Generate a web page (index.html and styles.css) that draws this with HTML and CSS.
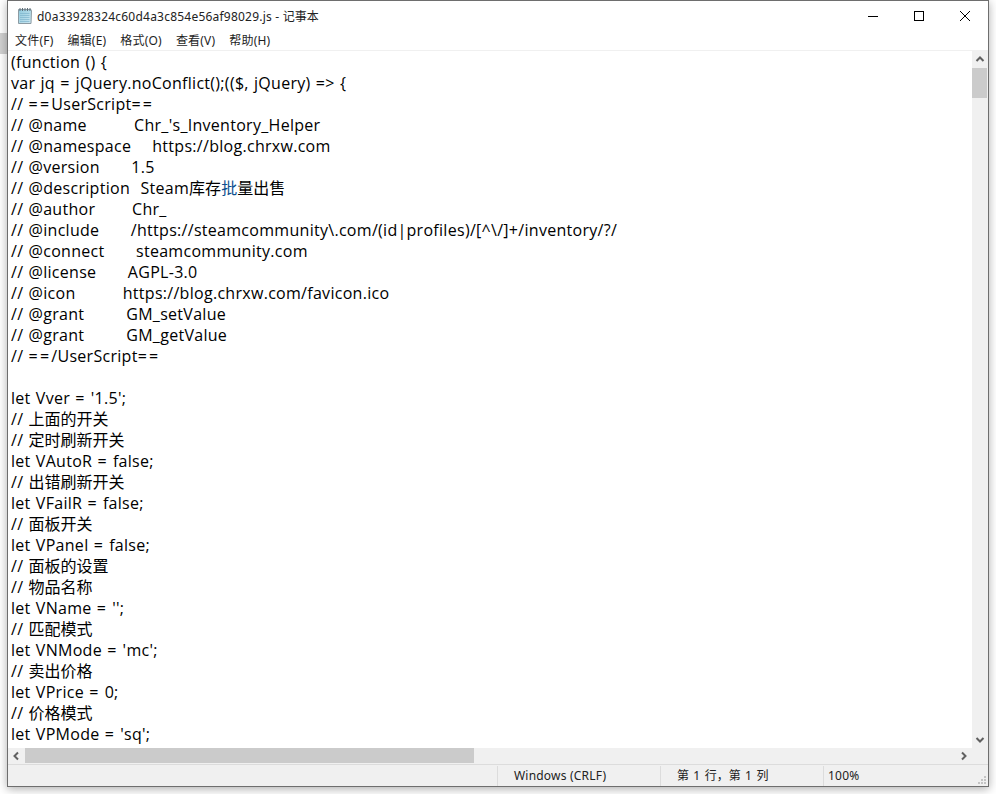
FILE: index.html
```html
<!DOCTYPE html>
<html lang="zh-CN">
<head>
<meta charset="utf-8">
<title>记事本</title>
<link rel="stylesheet" href="styles.css">
</head>
<body>
<div class="backdrop"></div>
<div class="window">
  <header class="titlebar">
    <svg class="app-icon" width="16" height="18" viewBox="0 0 16 18">
      <defs>
        <linearGradient id="page" x1="0" y1="0" x2="1" y2="1">
          <stop offset="0" stop-color="#8fc9dc"/>
          <stop offset="1" stop-color="#cfe8f2"/>
        </linearGradient>
      </defs>
      <path d="M1.500 2.500h12.500l.5 1-.5 13h-12.500z" fill="url(#page)" stroke="#8c9ba3"/>
      <path d="M3 6.500h9.500M3 8.500h9.500M3 10.500h9.500M3 12.500h9.500M3 14.500h9.500" stroke="#7db4cc" stroke-opacity="0.7"/>
      <path d="M3 1v3M5.500 1v3M8 1v3M10.500 1v3M13 1v3" stroke="#5f6f78"/>
    </svg>
    <span class="title">d0a33928324c60d4a3c854e56af98029.js - <span class="zh">记事本</span></span>
    <div class="controls">
      <svg class="ctl" width="46" height="30" viewBox="0 0 46 30"><path d="M18 15.500h10" stroke="#000"/></svg>
      <svg class="ctl" width="46" height="30" viewBox="0 0 46 30"><rect x="18.500" y="10.500" width="9" height="9" fill="none" stroke="#000"/></svg>
      <svg class="ctl" width="46" height="30" viewBox="0 0 46 30"><path d="M18 10l10 10M28 10l-10 10" stroke="#000"/></svg>
    </div>
  </header>
  <nav class="menubar">
    <span class="menu">文件(F)</span>
    <span class="menu">编辑(E)</span>
    <span class="menu">格式(O)</span>
    <span class="menu">查看(V)</span>
    <span class="menu">帮助(H)</span>
  </nav>
  <div class="editor">
    <div class="text-row">
<pre class="code">(function () {
var jq <span class="eq">=</span> jQuery.noConflict();(($, jQuery) =&gt; {
// <span class="eq2">==</span>UserScript<span class="eq2">==</span>
// @name         Chr_'s_Inventory_Helper
// @namespace    https://blog.chrxw.com
// @version      1.5
// @description  Steam<span class="zh">库存</span><span class="zh selected-word">批</span><span class="zh">量出售</span>
// @author       Chr_
// @include      /https://steamcommunity\.com/(id|profiles)/[^\/]+/inventory/?/
// @connect      steamcommunity.com
// @license      AGPL-3.0
// @icon         https://blog.chrxw.com/favicon.ico
// @grant        GM_setValue
// @grant        GM_getValue
// <span class="eq2">==</span>/UserScript<span class="eq2">==</span>

let Vver <span class="eq">=</span> '1.5';
// <span class="zh">上面的开关</span>
// <span class="zh">定时刷新开关</span>
let VAutoR <span class="eq">=</span> false;
// <span class="zh">出错刷新开关</span>
let VFailR <span class="eq">=</span> false;
// <span class="zh">面板开关</span>
let VPanel <span class="eq">=</span> false;
// <span class="zh">面板的设置</span>
// <span class="zh">物品名称</span>
let VName <span class="eq">=</span> '';
// <span class="zh">匹配模式</span>
let VNMode <span class="eq">=</span> 'mc';
// <span class="zh">卖出价格</span>
let VPrice <span class="eq">=</span> 0;
// <span class="zh">价格模式</span>
let VPMode <span class="eq">=</span> 'sq';</pre>
      <div class="vscroll">
        <svg class="arrow" width="16" height="17" viewBox="0 0 16 17"><path d="M4.500 10l3.500-3.500 3.500 3.500" fill="none" stroke="#606060" stroke-width="2"/></svg>
        <div class="vtrack"><div class="vthumb"></div></div>
        <svg class="arrow" width="16" height="17" viewBox="0 0 16 17"><path d="M4.500 7l3.500 3.500L11.500 7" fill="none" stroke="#606060" stroke-width="2"/></svg>
      </div>
    </div>
    <div class="hscroll">
      <svg class="arrow" width="17" height="16" viewBox="0 0 17 16"><path d="M10 4.500L6.500 8l3.500 3.500" fill="none" stroke="#606060" stroke-width="2"/></svg>
      <div class="htrack"><div class="hthumb"></div></div>
      <svg class="arrow" width="17" height="16" viewBox="0 0 17 16"><path d="M7 4.500L10.500 8 7 11.500" fill="none" stroke="#606060" stroke-width="2"/></svg>
      <div class="corner"></div>
    </div>
  </div>
  <footer class="statusbar">
    <div class="cell cell-blank"></div>
    <div class="cell cell-eol">Windows (CRLF)</div>
    <div class="cell cell-pos"><span class="zh">第</span> 1 <span class="zh">行，第</span> 1 <span class="zh">列</span></div>
    <div class="cell cell-zoom">100%</div>
    <svg class="grip" width="12" height="12" viewBox="0 0 12 12"><path d="M9 2h2v2H9zM6 5h2v2H6zM9 5h2v2H9zM3 8h2v2H3zM6 8h2v2H6zM9 8h2v2H9z" fill="#c4c4c4"/></svg>
  </footer>
</div>
</body>
</html>
```
FILE: styles.css
```css
* { box-sizing: border-box; }
html, body { margin: 0; height: 100%; }
body {
  width: 996px;
  height: 794px;
  overflow: hidden;
  background: #fff;
  padding: 0 7px 7px 7px;
  font-family: "Noto Sans", "Noto Sans CJK SC", sans-serif;
  display: flex;
}
.zh { letter-spacing: 0; }
.backdrop {
  position: absolute;
  left: 0;
  top: 33px;
  width: 8px;
  height: 21px;
  background: #d0d0d0;
}
.window {
  position: relative;
  width: 982px;
  height: 787px;
  display: flex;
  flex-direction: column;
  background: #fff;
  border: 1px solid #6e6e6e;
  box-shadow: 0 2px 9px rgba(0, 0, 0, 0.32);
}
.titlebar {
  height: 29px;
  display: flex;
  align-items: center;
  padding-left: 9px;
  flex: none;
}
.app-icon { flex: none; margin-right: 4px; }
.title {
  font-size: 12px;
  letter-spacing: 0.22px;
  color: #222;
  flex: 1;
}
.controls { display: flex; }
.ctl { display: block; }
.menubar {
  height: 21px;
  display: flex;
  align-items: center;
  flex: none;
  padding-left: 0;
  border-bottom: 1px solid #f0f0f0;
}
.menu {
  padding: 0 7px;
  font-size: 12px;
  letter-spacing: 0.2px;
  color: #1e1e1e;
}
.editor {
  flex: 1;
  min-height: 0;
  display: flex;
  flex-direction: column;
}
.text-row { flex: 1; min-height: 0; display: flex; }
.code {
  flex: 1;
  margin: 0;
  padding: 1px 0 0 3px;
  overflow: hidden;
  font-family: "Open Sans", "Noto Sans CJK SC", sans-serif;
  font-size: 16px;
  letter-spacing: 0.29px;
  word-spacing: 0.8px;
  line-height: 21px;
  color: #000;
  white-space: pre;
}
.eq { letter-spacing: 1px; }
.eq2 { letter-spacing: 2.2px; }
.selected-word { color: #0b4f8f; }
.vscroll {
  width: 16px;
  flex: none;
  background: #f0f0f0;
  display: flex;
  flex-direction: column;
}
.arrow { display: block; flex: none; }
.vtrack { flex: 1; min-height: 0; }
.vthumb { height: 30px; margin-right: 1px; background: #cbcbcb; }
.hscroll {
  height: 16px;
  flex: none;
  display: flex;
  background: #f0f0f0;
}
.htrack { flex: 1; height: 16px; }
.hthumb { width: 449px; height: 15px; background: #cbcbcb; }
.corner { width: 16px; flex: none; }
.statusbar {
  height: 22px;
  flex: none;
  display: flex;
  background: #f0f0f0;
  border-top: 1px solid #dcdcdc;
  font-size: 12px;
  letter-spacing: 0.2px;
  color: #222;
  position: relative;
  align-items: stretch;
}
.cell {
  display: flex;
  align-items: center;
  white-space: pre;
  margin-top: 1px;
  padding-bottom: 2px;
  border-right: 1px solid #dcdcdc;
}
.cell-blank { width: 490px; }
.cell-eol { width: 163px; padding-left: 16px; }
.cell-pos { width: 163px; padding-left: 16px; word-spacing: 1px; }
.cell-zoom { border-right: 0; padding-left: 4px; flex: 1; }
.grip { position: absolute; right: 1px; bottom: 0; }
```
